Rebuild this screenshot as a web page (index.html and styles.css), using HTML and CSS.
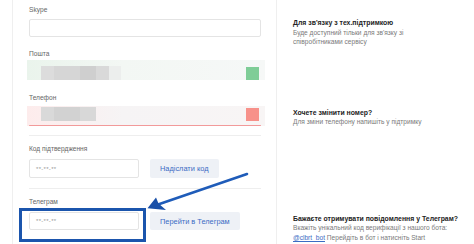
FILE: index.html
```html
<!DOCTYPE html>
<html lang="uk">
<head>
<meta charset="utf-8">
<link rel="stylesheet" href="styles.css">
</head>
<body>
<div class="page">
  <div class="form">
    <div class="field">
      <div class="label">Skype</div>
      <div class="input"></div>
    </div>
    <div class="field f-mail">
      <div class="label">Пошта</div>
      <div class="masked ok"><span class="blur"></span><span class="flag"></span></div>
    </div>
    <div class="field f-phone">
      <div class="label">Телефон</div>
      <div class="masked bad"><span class="blur"></span><span class="flag"></span></div>
    </div>
    <div class="sep"></div>
    <div class="field f-code">
      <div class="label">Код підтвердження</div>
      <div class="row">
        <div class="input short"><span class="ph">**-**-**</span></div>
        <button class="btn">Надіслати код</button>
      </div>
    </div>
    <div class="sep sep2"></div>
    <div class="field f-tg">
      <div class="label">Телеграм</div>
      <div class="row">
        <div class="input short"><span class="ph">**-**-**</span></div>
        <button class="btn">Перейти в Телеграм</button>
      </div>
    </div>
  </div>
  <div class="aside">
    <div class="note n1">
      <div class="title">Для зв'язку з тех.підтримкою</div>
      <div class="text">Буде доступний тільки для зв'язку зі<br>співробітниками сервісу</div>
    </div>
    <div class="note n2">
      <div class="title">Хочете змінити номер?</div>
      <div class="text">Для зміни телефону напишіть у підтримку</div>
    </div>
    <div class="note n3">
      <div class="title">Бажаєте отримувати повідомлення у Телеграм?</div>
      <div class="text">Вкажіть унікальний код верифікації з нашого бота:<br><span class="link">@clbrt_bot</span> Перейдіть в бот і натисніть Start</div>
    </div>
  </div>
  <div class="highlight"></div>
  <svg class="arrow" width="474" height="244" viewBox="0 0 474 244">
    <line x1="247" y1="174" x2="158" y2="204.5" stroke="#1f5cb9" stroke-width="2.6" stroke-linecap="round"/>
    <polygon points="147.5,208.3 156,197.5 158.5,203.5 166,210" fill="#1a50a8"/>
  </svg>
</div>
</body>
</html>
```
FILE: styles.css
```css
* { box-sizing: border-box; }
html, body { margin: 0; padding: 0; background: #fff; }
body { font-family: "Liberation Sans", Arial, sans-serif; color: #333; }
.page { position: relative; width: 474px; height: 244px; display: flex; overflow: hidden; }
.form {
  margin-left: 12px;
  width: 265px;
  border-left: 1px solid #efefef;
  border-right: 1px solid #efefef;
  padding: 5px 15px 0 16px;
  display: flex; flex-direction: column;
}
.label { font-size: 6.6px; line-height: 10px; color: #666; height: 10px; }
.input { height: 18px; border: 1px solid #e4e4e4; border-radius: 2px; margin-top: 4px; background: #fff; display: flex; align-items: center; }
.f-mail { margin-top: 12px; }
.masked { position: relative; height: 20px; margin: 1px -4px 0 -2px; display: flex; align-items: flex-end; }
.masked.ok { background: linear-gradient(90deg, #eaf4ec 0, #f3f7f4 40%, #f6f8f7 100%); }
.masked.bad { background: linear-gradient(90deg, #fdecec 0, #f6f4f5 40%, #f8f5f5 100%); }
.blur { position: absolute; left: 14px; bottom: 0; height: 14px; width: 68px;
  background: linear-gradient(90deg, #dcdcdc 0 13px, #d6d6d6 13px 39px, #cfcfcf 39px 55px, #d9d9d9 55px 68px); }
.ok .blur::after { content: ""; position: absolute; left: 68px; top: 0; width: 12px; height: 14px; background: #eceeed; }
.bad .blur { width: 55px; height: 14px; bottom: 5px;
  background: linear-gradient(90deg, #d9d9d9 0 13px, #d2d2d2 13px 39px, #d8d8d8 39px 55px); }
.flag { position: absolute; right: 6px; bottom: 0; width: 13px; height: 13px; }
.ok .flag { background: #7fcd97; }
.bad .flag { background: #f7918a; bottom: 5px; }
.f-phone { margin-top: 13px; }
.f-phone .masked { margin-top: 3px; }
.f-phone .masked::after { content: ""; position: absolute; left: 2px; right: 4px; bottom: 0; height: 1px; background: #f29a9a; border-radius: 1px; }
.sep { height: 1px; background: #eeeeee; margin-top: 9px; }
.f-code { margin-top: 8px; }
.row { display: flex; gap: 11px; margin-top: 5px; }
.row .input { margin-top: 0; }
.short { width: 110px; height: 19px; padding-left: 6px; }
.ph { font-size: 6px; color: #999; letter-spacing: 0.3px; }
.btn { height: 19px; border: 0; border-radius: 2px; background: #eef1f6; color: #3b6cc4; font-family: "Liberation Sans", Arial, sans-serif; font-size: 7.4px; padding: 0 10px; }
.sep2 { margin-top: 10px; }
.f-tg { margin-top: 8px; }
.f-tg .short, .f-tg .btn { height: 18px; }
.aside { padding-left: 16px; display: flex; flex-direction: column; }
.title { font-size: 6.9px; font-weight: bold; color: #222; line-height: 9.5px; }
.text { font-size: 6.6px; color: #7a7a7a; line-height: 9.5px; }
.n1 { margin-top: 18px; }
.n2 { margin-top: 61px; }
.n3 { margin-top: 87px; }
.link { color: #3b6cc4; text-decoration: underline; }
.highlight { position: absolute; left: 19px; top: 208px; width: 127px; height: 34px; border: 3px solid #1b55ad; }
.arrow { position: absolute; left: 0; top: 0; pointer-events: none; }
```
